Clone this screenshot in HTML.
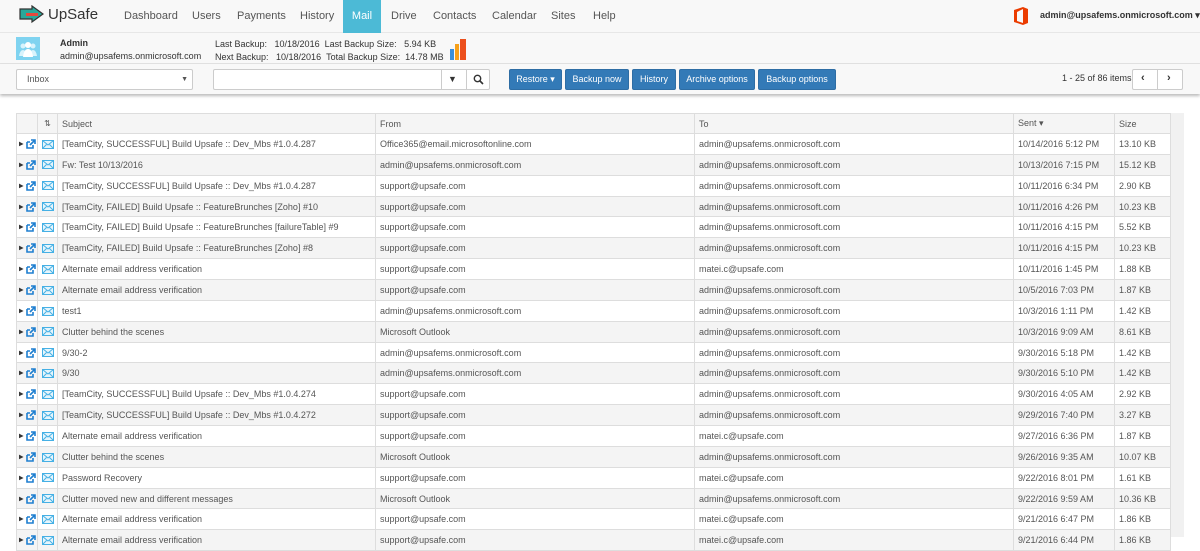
<!DOCTYPE html>
<html><head><meta charset="utf-8"><style>
*{box-sizing:border-box;margin:0;padding:0}
body{width:1200px;height:537px;overflow:hidden;background:#fff;font-family:"Liberation Sans",sans-serif;color:#555;position:relative}
.nav{position:absolute;top:0;left:0;width:1200px;height:33px;background:#f8f8f8;border-bottom:1px solid #e7e7e7}
.nav a{position:absolute;top:0;height:33px;line-height:32px;font-size:11px;color:#555;text-decoration:none}
.info{position:absolute;top:33px;left:0;width:1200px;height:31px;background:#f8f8f8;border-bottom:1px solid #e2e2e2;font-size:9px;color:#333}
.tool{position:absolute;top:64px;left:0;width:1200px;height:30px;background:#f8f8f8;box-shadow:0 2px 3px #bbb}
.inp{position:absolute;background:#fff;border:1px solid #ccc;border-radius:2px}
.btn{position:absolute;top:69px;height:21px;background:#337ab7;border:1px solid #2e6da4;border-radius:2px;color:#fff;font-size:9px;line-height:19px;text-align:center}
table{position:absolute;top:113px;left:16px;border-collapse:collapse;font-size:9px;table-layout:fixed}
td{border:1px solid #ddd;height:20.87px;padding:0 4px;white-space:nowrap;overflow:hidden;color:#555}
tr.h td{background:#f5f5f5;height:20px}
tr.g td{background:#f4f4f4}
.ic{padding:0;font-size:8px}
.ic svg{vertical-align:middle}
.sb{position:absolute;left:1170px;top:113px;width:14px;height:424px;background:#f1f1f1;border-left:1px solid #ddd}
</style></head><body>
<div class="nav">
<svg style="position:absolute;left:19px;top:5px" width="26" height="20" viewBox="0 0 26 20"><path d="M1 4h12V1l11 8-11 8v-3H1z" fill="#2aa89a" stroke="#333" stroke-width="1.2"/><path d="M7 8h12v3H7z" fill="#e6483c"/></svg>
<span style="position:absolute;left:48px;top:6px;font-size:15px;color:#333">UpSafe</span>
<a style="left:124px">Dashboard</a><a style="left:192px">Users</a><a style="left:237px">Payments</a><a style="left:300px">History</a>
<a style="left:343px;width:38px;background:#4cbad6;color:#fff;text-align:center">Mail</a>
<a style="left:391px">Drive</a><a style="left:433px">Contacts</a><a style="left:492px">Calendar</a><a style="left:551px">Sites</a><a style="left:593px">Help</a>
<svg style="position:absolute;left:1012px;top:6px" width="18" height="20" viewBox="0 0 18 20"><path d="M2 4l9-3 5 2v14l-5 2-9-3zM5 6v9l6 2V3z" fill="#eb3c00"/></svg>
<span style="position:absolute;left:1040px;top:10px;font-size:9px;font-weight:bold;color:#333">admin@upsafems.onmicrosoft.com ▾</span>
</div>
<div class="info">
<svg style="position:absolute;left:16px;top:4px" width="24" height="23" viewBox="0 0 24 23"><rect width="24" height="23" fill="#7fd3f0"/><circle cx="7" cy="9" r="2.5" fill="#d8f3fc"/><circle cx="17" cy="9" r="2.5" fill="#d8f3fc"/><circle cx="12" cy="8" r="3" fill="#fff"/><path d="M3 19q1-6 4-6t4 6zM13 19q1-6 4-6t4 6z" fill="#d8f3fc"/><path d="M7 20q1-8 5-8t5 8z" fill="#fff"/></svg>
<div style="position:absolute;left:60px;top:5px;font-weight:bold">Admin</div>
<div style="position:absolute;left:60px;top:18px">admin@upsafems.onmicrosoft.com</div>
<div style="position:absolute;left:215px;top:5px;line-height:13px">Last Backup:&nbsp;&nbsp; 10/18/2016 &nbsp;Last Backup Size: &nbsp; 5.94 KB<br>Next Backup:&nbsp;&nbsp; 10/18/2016 &nbsp;Total Backup Size: &nbsp;14.78 MB</div>
<div style="position:absolute;left:450px;top:16px;width:4px;height:11px;background:#3a8fd9"></div>
<div style="position:absolute;left:455px;top:11px;width:4px;height:16px;background:#f7a11a"></div>
<div style="position:absolute;left:460px;top:6px;width:6px;height:21px;background:#ec4f1c"></div>
</div>
<div class="tool">
<div class="inp" style="left:16px;top:5px;width:177px;height:21px;font-size:9px;line-height:19px;padding-left:10px">Inbox<span style="position:absolute;right:4px;font-size:7px">▼</span></div>
<div class="inp" style="left:213px;top:5px;width:277px;height:21px"><div style="position:absolute;left:227px;top:0;width:1px;height:19px;background:#ccc"></div><div style="position:absolute;left:252px;top:0;width:1px;height:19px;background:#ccc"></div><span style="position:absolute;left:234px;top:4px;font-size:9px;color:#333">▼</span><svg style="position:absolute;left:259px;top:4px" width="11" height="11" viewBox="0 0 11 11"><circle cx="4.5" cy="4.5" r="3.2" fill="none" stroke="#333" stroke-width="1.4"/><path d="M7 7l3 3" stroke="#333" stroke-width="1.6"/></svg></div>
<div style="position:absolute;left:1062px;top:9px;font-size:9px;color:#333">1 - 25 of 86 items</div>
<div class="inp" style="left:1132px;top:5px;width:51px;height:21px"><div style="position:absolute;left:24px;top:0;width:1px;height:19px;background:#ccc"></div><span style="position:absolute;left:8px;top:2px;font-size:11px;font-weight:bold;color:#333">‹</span><span style="position:absolute;left:34px;top:2px;font-size:11px;font-weight:bold;color:#333">›</span></div>
</div>
<div class="btn" style="left:509px;width:53px">Restore ▾</div>
<div class="btn" style="left:565px;width:64px">Backup now</div>
<div class="btn" style="left:632px;width:44px">History</div>
<div class="btn" style="left:679px;width:76px">Archive options</div>
<div class="btn" style="left:758px;width:78px">Backup options</div>
<table>
<colgroup><col style="width:21px"><col style="width:20px"><col style="width:318px"><col style="width:319px"><col style="width:319px"><col style="width:101px"><col style="width:56px"></colgroup>
<tr class="h"><td></td><td class="ic" style="text-align:center">⇅</td><td>Subject</td><td>From</td><td>To</td><td>Sent ▾</td><td>Size</td></tr>
</table>
<div class="sb"></div>
<script>
var r=[["[TeamCity, SUCCESSFUL] Build Upsafe :: Dev_Mbs #1.0.4.287","Office365@email.microsoftonline.com","admin@upsafems.onmicrosoft.com","10/14/2016 5:12 PM","13.10 KB"],
["Fw: Test 10/13/2016","admin@upsafems.onmicrosoft.com","admin@upsafems.onmicrosoft.com","10/13/2016 7:15 PM","15.12 KB"],
["[TeamCity, SUCCESSFUL] Build Upsafe :: Dev_Mbs #1.0.4.287","support@upsafe.com","admin@upsafems.onmicrosoft.com","10/11/2016 6:34 PM","2.90 KB"],
["[TeamCity, FAILED] Build Upsafe :: FeatureBrunches [Zoho] #10","support@upsafe.com","admin@upsafems.onmicrosoft.com","10/11/2016 4:26 PM","10.23 KB"],
["[TeamCity, FAILED] Build Upsafe :: FeatureBrunches [failureTable] #9","support@upsafe.com","admin@upsafems.onmicrosoft.com","10/11/2016 4:15 PM","5.52 KB"],
["[TeamCity, FAILED] Build Upsafe :: FeatureBrunches [Zoho] #8","support@upsafe.com","admin@upsafems.onmicrosoft.com","10/11/2016 4:15 PM","10.23 KB"],
["Alternate email address verification","support@upsafe.com","matei.c@upsafe.com","10/11/2016 1:45 PM","1.88 KB"],
["Alternate email address verification","support@upsafe.com","admin@upsafems.onmicrosoft.com","10/5/2016 7:03 PM","1.87 KB"],
["test1","admin@upsafems.onmicrosoft.com","admin@upsafems.onmicrosoft.com","10/3/2016 1:11 PM","1.42 KB"],
["Clutter behind the scenes","Microsoft Outlook","admin@upsafems.onmicrosoft.com","10/3/2016 9:09 AM","8.61 KB"],
["9/30-2","admin@upsafems.onmicrosoft.com","admin@upsafems.onmicrosoft.com","9/30/2016 5:18 PM","1.42 KB"],
["9/30","admin@upsafems.onmicrosoft.com","admin@upsafems.onmicrosoft.com","9/30/2016 5:10 PM","1.42 KB"],
["[TeamCity, SUCCESSFUL] Build Upsafe :: Dev_Mbs #1.0.4.274","support@upsafe.com","admin@upsafems.onmicrosoft.com","9/30/2016 4:05 AM","2.92 KB"],
["[TeamCity, SUCCESSFUL] Build Upsafe :: Dev_Mbs #1.0.4.272","support@upsafe.com","admin@upsafems.onmicrosoft.com","9/29/2016 7:40 PM","3.27 KB"],
["Alternate email address verification","support@upsafe.com","matei.c@upsafe.com","9/27/2016 6:36 PM","1.87 KB"],
["Clutter behind the scenes","Microsoft Outlook","admin@upsafems.onmicrosoft.com","9/26/2016 9:35 AM","10.07 KB"],
["Password Recovery","support@upsafe.com","matei.c@upsafe.com","9/22/2016 8:01 PM","1.61 KB"],
["Clutter moved new and different messages","Microsoft Outlook","admin@upsafems.onmicrosoft.com","9/22/2016 9:59 AM","10.36 KB"],
["Alternate email address verification","support@upsafe.com","matei.c@upsafe.com","9/21/2016 6:47 PM","1.86 KB"],
["Alternate email address verification","support@upsafe.com","matei.c@upsafe.com","9/21/2016 6:44 PM","1.86 KB"]];
var t=document.querySelector('table'),h='';
var ext='<svg width="10" height="10" viewBox="0 0 10 10"><path d="M1 3h3M1 3v6h6V6" fill="none" stroke="#1e7fd0" stroke-width="1.6"/><path d="M5 1h4v4M9 1L4 6" fill="none" stroke="#1e7fd0" stroke-width="1.6"/></svg>';
var env='<svg width="12" height="9" viewBox="0 0 12 9"><rect x="0.5" y="0.5" width="11" height="8" fill="#e6f5fc" stroke="#45b0e5"/><path d="M0.5 0.5l5.5 4.5 5.5-4.5M0.5 8.5l4-4M11.5 8.5l-4-4" fill="none" stroke="#45b0e5"/></svg>';
r.forEach(function(x,i){h+='<tr'+(i%2?' class="g"':'')+'><td class="ic" style="padding-left:2px"><span style="font-size:6px;color:#333;vertical-align:middle">▶</span> '+ext+'</td><td class="ic" style="text-align:center">'+env+'</td><td>'+x[0]+'</td><td>'+x[1]+'</td><td>'+x[2]+'</td><td>'+x[3]+'</td><td>'+x[4]+'</td></tr>'});
t.insertAdjacentHTML('beforeend',h);
</script>
</body></html>
